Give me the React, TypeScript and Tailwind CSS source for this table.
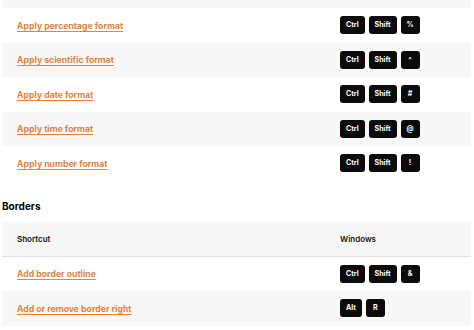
import React from "react";

const font = { fontFamily: "Inter, 'Liberation Sans', sans-serif" };

function Key({ k }: { k: string }) {
  return (
    <span className="inline-flex h-[18px] min-w-[19px] items-center justify-center rounded-[3px] bg-[#0b0b0b] px-[6px] text-[7px] font-bold text-white">
      {k}
    </span>
  );
}

function Row({ label, keys, gray }: { label: string; keys: string[]; gray?: boolean }) {
  return (
    <div className={`flex h-[34.5px] items-center ${gray ? "bg-[#f7f7f7]" : "bg-white"}`}>
      <div className="w-[338px] pb-[2px] pl-[15px] leading-[12px]">
        <a className="text-[8.7px] font-bold text-[#e2843c] underline decoration-[1px] underline-offset-[1.5px]">{label}</a>
      </div>
      <div className="flex gap-[4px]">
        {keys.map((k, i) => (
          <Key key={i} k={k} />
        ))}
      </div>
    </div>
  );
}

export default function App() {
  return (
    <div className="h-[330px] w-[474px] overflow-hidden bg-white" style={font}>
      <div className="ml-[2px] w-[469px]">
        <div className="h-[8px] bg-[#f7f7f7]" />
        <Row label="Apply percentage format" keys={["Ctrl", "Shift", "%"]} />
        <Row label="Apply scientific format" keys={["Ctrl", "Shift", "^"]} gray />
        <Row label="Apply date format" keys={["Ctrl", "Shift", "#"]} />
        <Row label="Apply time format" keys={["Ctrl", "Shift", "@"]} gray />
        <Row label="Apply number format" keys={["Ctrl", "Shift", "!"]} />
        <div className="flex h-[41.5px] items-end pb-[10px]">
          <h2 className="text-[10px] font-bold leading-[12px] text-black">Borders</h2>
        </div>
        <div className="flex h-[34.5px] items-center border-b-[1.5px] border-[#e2e2e2] bg-[#f7f7f7] text-[8px] font-semibold text-[#111]">
          <div className="w-[338px] pl-[15px]">Shortcut</div>
          <div>Windows</div>
        </div>
        <Row label="Add border outline" keys={["Ctrl", "Shift", "&"]} />
        <Row label="Add or remove border right" keys={["Alt", "R"]} gray />
      </div>
    </div>
  );
}
